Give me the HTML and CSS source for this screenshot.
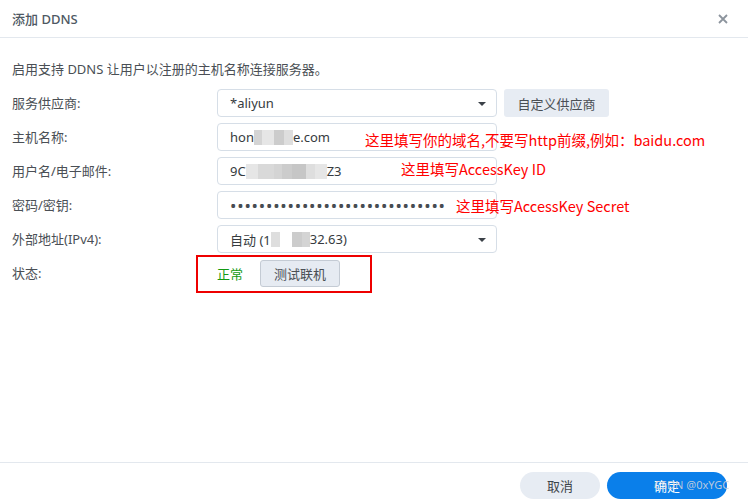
FILE: index.html
```html
<!DOCTYPE html>
<html lang="zh-CN">
<head>
    <meta charset="UTF-8">
    <meta name="viewport" content="width=device-width, initial-scale=1.0">
    <title>添加 DDNS</title>
    <link rel="stylesheet" href="styles.css">
</head>
<body>
    <div class="dialog">
        <div class="dialog-header">
            <span class="dialog-title">添加 DDNS</span>
            <svg class="close" width="10" height="10" viewBox="0 0 10 10">
                <path d="M1 1 L9 9 M9 1 L1 9" stroke="#8c949d" stroke-width="1.8" fill="none"/>
            </svg>
        </div>

        <div class="dialog-body">
            <p class="intro">启用支持 DDNS 让用户以注册的主机名称连接服务器。</p>

            <div class="form">
                <div class="row">
                    <label>服务供应商:</label>
                    <div class="field select">
                        <span>*aliyun</span>
                        <span class="caret"></span>
                    </div>
                    <button class="btn-light">自定义供应商</button>
                </div>

                <div class="row">
                    <label>主机名称:</label>
                    <div class="field">
                        <span>hon</span><span class="mask m1"></span><span class="mask m2"></span><span class="mask m3"></span><span class="mask m4"></span><span>e.com</span>
                    </div>
                    <span class="note note-host">这里填写你的域名,不要写http前缀,例如：baidu.com</span>
                </div>

                <div class="row">
                    <label>用户名/电子邮件:</label>
                    <div class="field">
                        <span>9C</span><span class="mask m2"></span><span class="mask m5"></span><span class="mask m1"></span><span class="mask m3"></span><span class="mask m6"></span><span class="mask m4"></span><span class="mask m2"></span><span>Z3</span>
                    </div>
                    <span class="note note-user">这里填写AccessKey ID</span>
                </div>

                <div class="row">
                    <label>密码/密钥:</label>
                    <div class="field">
                        <span class="dots">••••••••••••••••••••••••••••••</span>
                    </div>
                    <span class="note note-pass">这里填写AccessKey Secret</span>
                </div>

                <div class="row">
                    <label>外部地址(IPv4):</label>
                    <div class="field select">
                        <span>自动 (1</span><span class="mask m4"></span><span class="gap"></span><span class="mask m3"></span><span class="mask m1"></span><span>32.63)</span>
                        <span class="caret"></span>
                    </div>
                </div>

                <div class="row">
                    <label>状态:</label>
                    <div class="status">
                        <span class="ok">正常</span>
                        <button class="btn-test">测试联机</button>
                    </div>
                    <div class="highlight"></div>
                </div>
            </div>
        </div>

        <div class="dialog-footer">
            <button class="btn-cancel">取消</button>
            <button class="btn-primary">确定</button>
            <span class="watermark">CSDN @0xYGC</span>
        </div>
    </div>
</body>
</html>
```

FILE: styles.css
```css
body {
    margin: 0;
    background-color: #fff;
    font-family: "Noto Sans", "Noto Sans CJK SC", sans-serif;
    font-size: 13px;
    color: #4a4f55;
}
.dialog {
    width: 748px;
    height: 500px;
    display: flex;
    flex-direction: column;
    position: relative;
    overflow: hidden;
}
.dialog-header {
    height: 37px;
    border-bottom: 1px solid #e3e8ee;
    display: flex;
    align-items: center;
    justify-content: space-between;
    padding: 0 20px 0 12px;
}
.dialog-title {
    color: #4e5863;
    font-weight: 500;
}
.dialog-body {
    flex: 1;
    padding: 22px 12px 0;
}
.intro {
    margin: 0;
    line-height: 18px;
}
.form {
    margin-top: 11px;
    display: flex;
    flex-direction: column;
    gap: 6px;
}
.row {
    display: grid;
    grid-template-columns: 198px 280px auto;
    column-gap: 7px;
    height: 28px;
    align-items: center;
    position: relative;
}
label {
    line-height: 28px;
}
.field {
    height: 28px;
    box-sizing: border-box;
    border: 1px solid #d6dee7;
    border-radius: 4px;
    padding: 0 12px;
    display: flex;
    align-items: center;
    color: #363b40;
    white-space: nowrap;
}
.select {
    position: relative;
}
.caret {
    position: absolute;
    right: 10px;
    top: 12px;
    width: 0;
    height: 0;
    border-left: 4px solid transparent;
    border-right: 4px solid transparent;
    border-top: 4px solid #3b4148;
}
.mask {
    display: inline-block;
    height: 15px;
}
.m1 { width: 8px; background-color: #d4d4d4; }
.m2 { width: 12px; background-color: #e6e6e6; }
.m3 { width: 10px; background-color: #cccccc; }
.m4 { width: 9px; background-color: #dedede; }
.m5 { width: 16px; background-color: #d9d9d9; }
.m6 { width: 14px; background-color: #c6c6c6; }
.gap {
    display: inline-block;
    width: 12px;
}
.dots {
    font-size: 17px;
    letter-spacing: 0.8px;
    color: #474c52;
}
button {
    font-family: inherit;
    font-size: 13px;
    cursor: pointer;
}
.btn-light {
    width: 105px;
    height: 28px;
    border: none;
    border-radius: 3px;
    background-color: #e7ecf3;
    color: #4a4f55;
}
.note {
    position: absolute;
    color: #ff0000;
    font-family: "Noto Sans CJK SC", "Noto Sans", sans-serif;
    font-size: 14.5px;
    line-height: 20px;
    white-space: nowrap;
}
.note-host { left: 353px; top: 7px; }
.note-user { left: 389px; top: 2px; }
.note-pass { left: 444px; top: 5px; }
.status {
    display: flex;
    align-items: center;
    gap: 17px;
}
.ok {
    color: #139a13;
}
.btn-test {
    width: 80px;
    height: 27px;
    border: 1px solid #c4cbd4;
    border-radius: 3px;
    background-color: #e6ebf2;
    color: #4a4f55;
}
.highlight {
    position: absolute;
    left: 184px;
    top: -4px;
    width: 176px;
    height: 38px;
    box-sizing: border-box;
    border: 2px solid #ee0000;
}
.dialog-footer {
    border-top: 1px solid #e3e8ee;
    display: flex;
    justify-content: flex-end;
    align-items: flex-start;
    gap: 7px;
    padding: 9px 21px 0 0;
    box-sizing: border-box;
    height: 38px;
    position: relative;
}
.btn-cancel {
    width: 80px;
    height: 27px;
    border: none;
    border-radius: 14px;
    background-color: #e7ecf3;
    color: #3e444a;
}
.btn-primary {
    width: 120px;
    height: 27px;
    border: none;
    border-radius: 14px;
    background-color: #0a7fea;
    color: #fff;
}
.watermark {
    position: absolute;
    left: 654px;
    top: 14px;
    font-size: 11px;
    color: rgba(205, 210, 220, 0.9);
    white-space: nowrap;
}
```
